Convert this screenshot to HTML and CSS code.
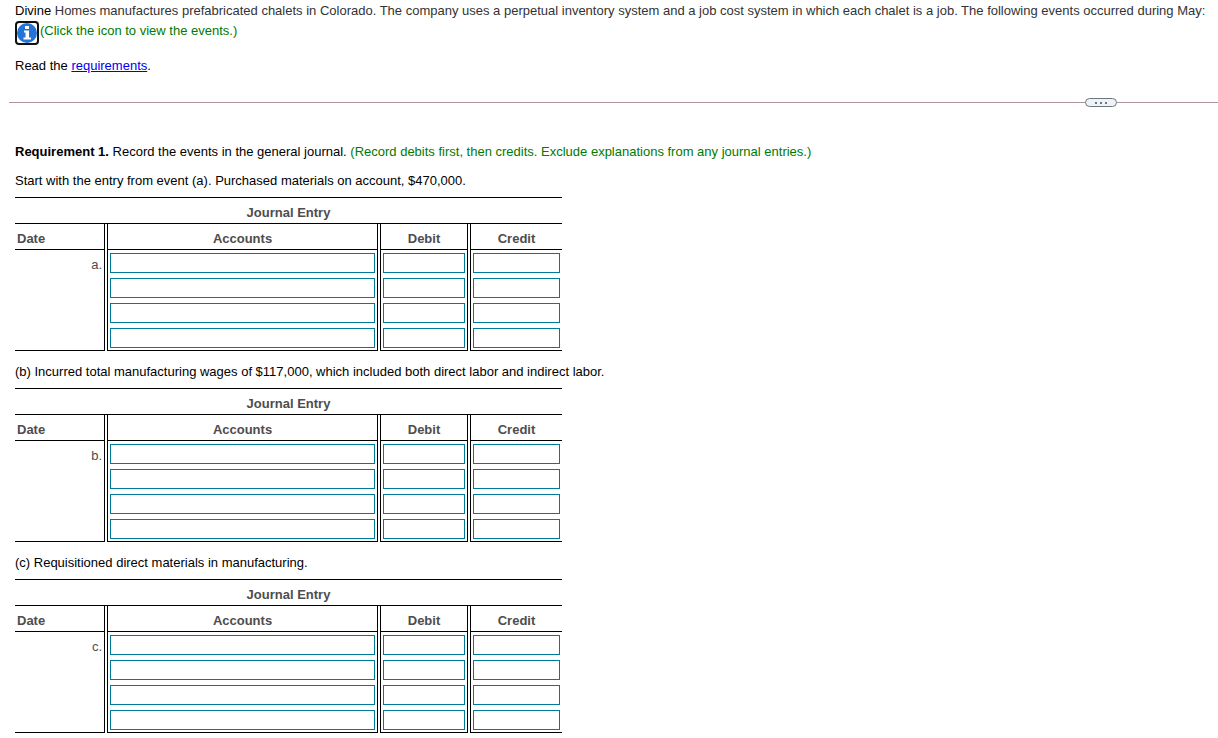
FILE: index.html
```
<!DOCTYPE html>
<html lang="en">

<head>
    <meta charset="UTF-8">
    <meta name="viewport" content="width=device-width, initial-scale=1.0">
    <title>Divine Homes - Journal Entries</title>
    <link rel="stylesheet" href="styles.css">
</head>

<body>

    <!-- Problem statement -->
    <div class="problem">
        <p class="intro"><span class="company">Divine</span> Homes manufactures prefabricated chalets in Colorado. The company uses a perpetual inventory system and a job cost system in which each chalet is a job. The following events occurred during May:</p>
        <div class="events">
            <button class="info-btn" type="button" aria-label="View the events">
                <svg width="24" height="24" viewBox="0 0 24 24">
                    <rect x="1" y="1" width="22" height="22" rx="3" fill="#fff" stroke="#111" stroke-width="2"/>
                    <circle cx="12" cy="12" r="10" fill="#2473d6"/>
                    <path d="M10 5h4v3h-4zM9 9.500h5v7h2v2H8.500v-2h2v-5H9z" fill="#fff"/>
                </svg>
            </button>
            <span class="hint">(Click the icon to view the events.)</span>
        </div>
        <p class="read">Read the <a href="#requirements">requirements</a>.</p>
    </div>

    <!-- Divider -->
    <div class="divider">
        <button class="more-btn" type="button" aria-label="More">
            <svg width="12" height="2" viewBox="0 0 12 2">
                <path d="M0 0h2v2H0zM5 0h2v2H5zM10 0h2v2h-2z" fill="#6b7683"/>
            </svg>
        </button>
    </div>

    <!-- Journal entries -->
    <div class="answer" id="requirements">
        <p class="step"><b>Requirement 1.</b> Record the events in the general journal. <span class="hint">(Record debits first, then credits. Exclude explanations from any journal entries.)</span></p>

        <p class="event">Start with the entry from event (a). Purchased materials on account, $470,000.</p>
        <table class="journal">
            <thead>
                <tr class="title"><th colspan="4">Journal Entry</th></tr>
                <tr>
                    <th class="date">Date</th>
                    <th class="accounts">Accounts</th>
                    <th class="debit">Debit</th>
                    <th class="credit">Credit</th>
                </tr>
            </thead>
            <tbody>
                <tr>
                    <td class="date">a.</td>
                    <td><input type="text" aria-label="a. account 1"></td>
                    <td><input type="text" aria-label="a. debit 1"></td>
                    <td><input type="text" aria-label="a. credit 1"></td>
                </tr>
                <tr>
                    <td class="date"></td>
                    <td><input type="text" aria-label="a. account 2"></td>
                    <td><input type="text" aria-label="a. debit 2"></td>
                    <td><input type="text" aria-label="a. credit 2"></td>
                </tr>
                <tr>
                    <td class="date"></td>
                    <td><input type="text" aria-label="a. account 3"></td>
                    <td><input type="text" aria-label="a. debit 3"></td>
                    <td><input type="text" aria-label="a. credit 3"></td>
                </tr>
                <tr>
                    <td class="date"></td>
                    <td><input type="text" aria-label="a. account 4"></td>
                    <td><input type="text" aria-label="a. debit 4"></td>
                    <td><input type="text" aria-label="a. credit 4"></td>
                </tr>
            </tbody>
        </table>

        <p class="event">(b) Incurred total manufacturing wages of $117,000, which included both direct labor and indirect labor.</p>
        <table class="journal">
            <thead>
                <tr class="title"><th colspan="4">Journal Entry</th></tr>
                <tr>
                    <th class="date">Date</th>
                    <th class="accounts">Accounts</th>
                    <th class="debit">Debit</th>
                    <th class="credit">Credit</th>
                </tr>
            </thead>
            <tbody>
                <tr>
                    <td class="date">b.</td>
                    <td><input type="text" aria-label="b. account 1"></td>
                    <td><input type="text" aria-label="b. debit 1"></td>
                    <td><input type="text" aria-label="b. credit 1"></td>
                </tr>
                <tr>
                    <td class="date"></td>
                    <td><input type="text" aria-label="b. account 2"></td>
                    <td><input type="text" aria-label="b. debit 2"></td>
                    <td><input type="text" aria-label="b. credit 2"></td>
                </tr>
                <tr>
                    <td class="date"></td>
                    <td><input type="text" aria-label="b. account 3"></td>
                    <td><input type="text" aria-label="b. debit 3"></td>
                    <td><input type="text" aria-label="b. credit 3"></td>
                </tr>
                <tr>
                    <td class="date"></td>
                    <td><input type="text" aria-label="b. account 4"></td>
                    <td><input type="text" aria-label="b. debit 4"></td>
                    <td><input type="text" aria-label="b. credit 4"></td>
                </tr>
            </tbody>
        </table>

        <p class="event">(c) Requisitioned direct materials in manufacturing.</p>
        <table class="journal">
            <thead>
                <tr class="title"><th colspan="4">Journal Entry</th></tr>
                <tr>
                    <th class="date">Date</th>
                    <th class="accounts">Accounts</th>
                    <th class="debit">Debit</th>
                    <th class="credit">Credit</th>
                </tr>
            </thead>
            <tbody>
                <tr>
                    <td class="date">c.</td>
                    <td><input type="text" aria-label="c. account 1"></td>
                    <td><input type="text" aria-label="c. debit 1"></td>
                    <td><input type="text" aria-label="c. credit 1"></td>
                </tr>
                <tr>
                    <td class="date"></td>
                    <td><input type="text" aria-label="c. account 2"></td>
                    <td><input type="text" aria-label="c. debit 2"></td>
                    <td><input type="text" aria-label="c. credit 2"></td>
                </tr>
                <tr>
                    <td class="date"></td>
                    <td><input type="text" aria-label="c. account 3"></td>
                    <td><input type="text" aria-label="c. debit 3"></td>
                    <td><input type="text" aria-label="c. credit 3"></td>
                </tr>
                <tr>
                    <td class="date"></td>
                    <td><input type="text" aria-label="c. account 4"></td>
                    <td><input type="text" aria-label="c. debit 4"></td>
                    <td><input type="text" aria-label="c. credit 4"></td>
                </tr>
            </tbody>
        </table>
    </div>

</body>

</html>
```
FILE: styles.css
```
* {
    box-sizing: border-box;
}

body {
    font-family: "Liberation Sans", Arial, sans-serif;
    font-size: 13px;
    line-height: 20px;
    color: #000;
    background-color: #fff;
    margin: 0;
}

p {
    margin: 0;
}

a {
    color: #0000ee;
}

.problem {
    padding: 1px 8px 0 15px;
}

.intro {
    color: #333;
}

.company {
    color: #000;
}

.events {
    display: flex;
    align-items: flex-start;
    gap: 1px;
}

.hint {
    color: #007a00;
}

.info-btn {
    display: flex;
    border: none;
    padding: 0;
    background: none;
    cursor: pointer;
}

.read {
    margin-top: 11px;
}

/* line with the "more" pill sitting in it */
.divider {
    display: flex;
    align-items: center;
    margin: 22px 0 35px 9px;
}

.divider::before,
.divider::after {
    content: "";
    height: 1px;
    background-color: #b0929c;
}

.divider::before {
    flex: 1;
}

.divider::after {
    width: 101px;
}

.more-btn {
    display: flex;
    align-items: center;
    justify-content: center;
    width: 32px;
    height: 9px;
    padding: 0;
    border: 1px solid #6b7683;
    border-radius: 5px;
    background-color: #f0f2f6;
    cursor: pointer;
}

.answer {
    padding: 0 13px 5px;
}

.step {
    padding: 0 2px;
}

.event {
    padding: 11px 2px 6px;
}

.step + .event {
    padding-top: 9px;
}

/* the 2px spacing leaves the gap between the double column rules */
.journal {
    width: 551px;
    border-collapse: separate;
    border-spacing: 2px 0;
    color: #4d4d4d;
}

.journal th {
    height: 26px;
    padding: 5px 2px 0;
    border-bottom: 1px solid #000;
}

.journal .title th {
    height: 27px;
    border-top: 1px solid #000;
}

.journal td {
    height: 25px;
    padding: 3px 2px 2px;
}

.journal tr:last-child td {
    height: 26px;
    border-bottom: 1px solid #000;
}

.journal td,
.journal tr:not(.title) th {
    border-left: 1px solid #000;
    border-right: 1px solid #000;
}

.journal tr:not(.title) > :first-child {
    border-left: none;
}

.journal tr:not(.title) > :last-child {
    border-right: none;
}

.journal th.date {
    width: 90px;
    text-align: left;
}

.journal td.date {
    text-align: right;
    padding-top: 5px;
    padding-bottom: 0;
}

.accounts {
    width: 271px;
}

.debit {
    width: 88px;
}

.credit {
    width: 92px;
}

.journal input {
    display: block;
    width: 100%;
    height: 20px;
    padding: 0 3px;
    border: 1px solid #007a99;
    font: inherit;
}
```
